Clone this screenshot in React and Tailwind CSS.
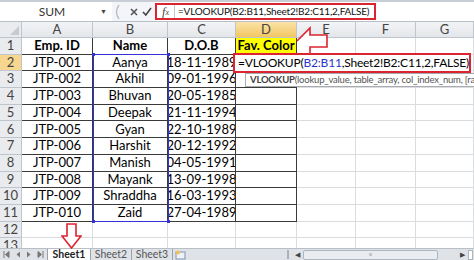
import React from 'react';

const rows = [
  ['Emp. ID', 'Name', 'D.O.B', 'Fav. Color'],
  ['JTP-001', 'Aanya', '18-11-1989'],
  ['JTP-002', 'Akhil', '09-01-1996'],
  ['JTP-003', 'Bhuvan', '20-05-1985'],
  ['JTP-004', 'Deepak', '21-11-1994'],
  ['JTP-005', 'Gyan', '22-10-1989'],
  ['JTP-006', 'Harshit', '20-12-1992'],
  ['JTP-007', 'Manish', '04-05-1991'],
  ['JTP-008', 'Mayank', '13-09-1998'],
  ['JTP-009', 'Shraddha', '16-03-1993'],
  ['JTP-010', 'Zaid', '27-04-1989'],
  [],
  [],
];

const letters = ['A', 'B', 'C', 'D', 'E', 'F', 'G'];

function FormulaBar() {
  return (
    <div>
      <div className="h-[2px] bg-[#c9ced6]" />
      <div className="flex h-[20px] bg-white border-b border-[#b8bec7]">
        <div className="w-[112px] shrink-0 flex items-center">
          <span className="flex-1 text-center text-[12px] text-[#333] pl-[4px]">SUM</span>
          <span className="w-[12px] text-[7px] text-[#444]">▼</span>
        </div>
        <div className="w-[43px] shrink-0 flex items-center bg-[#f3f5f8]">
          <svg width="8" height="16" viewBox="0 0 8 16" className="ml-[1px]">
            <path d="M6 1 Q1 8 6 15" stroke="#b9bec6" strokeWidth="1.4" fill="none" />
          </svg>
          <svg width="8" height="8" viewBox="0 0 8 8" className="ml-[9px]">
            <path d="M1 1 L7 7 M7 1 L1 7" stroke="#555" strokeWidth="1.6" />
          </svg>
          <svg width="10" height="9" viewBox="0 0 10 9" className="ml-[4px]">
            <path d="M1 5 L3.8 8 L9 1" stroke="#444" strokeWidth="1.6" fill="none" />
          </svg>
        </div>
        <div className="flex-1 flex items-start pt-[1px]">
          <div className="w-[221px] h-[17px] shrink-0 border-2 border-[#dc2330] flex items-center overflow-hidden">
            <span className="w-[18px] h-full shrink-0 flex items-center justify-center italic text-[12px] leading-none text-[#444] border-r border-[#c3c8ce] font-['Liberation_Serif',serif]">
              f<span className="text-[8px] mt-[3px]">x</span>
            </span>
            <span className="ml-[3px] text-[10px] tracking-[-0.2px] text-[#111] whitespace-nowrap">
              =VLOOKUP(B2:B11,Sheet2!B2:C11,2,FALSE)
            </span>
          </div>
        </div>
      </div>
    </div>
  );
}

function Grid() {
  return (
    <div className="relative flex-1 overflow-hidden">
      <div className="grid grid-cols-[22px_71px_75px_68px_61px_59px_60px_58px]">
        <div className="h-[16px] bg-[#e9ebee] border-r border-b border-[#bfc5cc] flex items-end justify-end p-[2px]">
          <svg width="9" height="9" viewBox="0 0 9 9">
            <path d="M9 0 L9 9 L0 9 Z" fill="#c6cbd1" />
          </svg>
        </div>
        {letters.map((l) => (
          <div
            key={l}
            className={
              'h-[16px] flex items-center justify-center text-[13px] text-[#444] border-r border-b border-[#bfc5cc] ' +
              (l === 'D' ? 'bg-gradient-to-b from-[#fbe3a6] to-[#f3c662]' : 'bg-gradient-to-b from-[#f3f4f6] to-[#e3e6ea]')
            }
          >
            {l}
          </div>
        ))}
        {rows.map((row, i) => {
          const r = i + 1;
          const inTable = r <= 11;
          return (
            <React.Fragment key={r}>
              <div
                className={
                  'h-[16.7px] flex items-center justify-center text-[13px] text-[#444] border-r border-b border-[#bfc5cc] ' +
                  (r === 2 ? 'bg-[#f7d68f]' : 'bg-[#e9ebee]')
                }
              >
                {r}
              </div>
              {letters.map((l, c) => {
                const table = inTable && c < 4;
                const head = r === 1;
                return (
                  <div
                    key={l}
                    className={
                      'h-[16.7px] flex items-center justify-center whitespace-nowrap overflow-hidden text-[13px] text-black border-r border-b ' +
                      (table ? 'border-[#3a3a3a] ' : 'border-[#dadcdf] ') +
                      (head ? 'font-bold ' : '') +
                      (head && c === 3 ? 'bg-[#ffff00]' : 'bg-white')
                    }
                  >
                    {row[c] || ''}
                  </div>
                );
              })}
            </React.Fragment>
          );
        })}
      </div>

      {/* range highlight B2:B11 */}
      <div className="absolute left-[93px] top-[32px] w-[76px] h-[168px] border border-[#3232d6] pointer-events-none">
        <span className="absolute -left-[2px] -top-[2px] w-[3px] h-[3px] bg-[#3232d6]" />
        <span className="absolute -right-[2px] -top-[2px] w-[3px] h-[3px] bg-[#3232d6]" />
        <span className="absolute -left-[2px] -bottom-[2px] w-[3px] h-[3px] bg-[#3232d6]" />
        <span className="absolute -right-[2px] -bottom-[2px] w-[3px] h-[3px] bg-[#3232d6]" />
      </div>

      {/* cell in edit mode */}
      <div className="absolute left-[233px] top-[31px] w-[238px] h-[20px] border-2 border-[#dc2330] bg-white flex items-center pl-[3px] text-[12px] tracking-[-0.2px] whitespace-nowrap">
        <span>=VLOO</span>
        <span className="w-px h-[13px] bg-black" />
        <span>KUP(</span>
        <span className="text-[#2b35c9]">B2:B11</span>
        <span>,Sheet2!B2:C11,2,FALSE)</span>
      </div>

      {/* function tooltip */}
      <div className="absolute left-[245px] top-[51px] w-[229px] h-[14px] border border-r-0 border-[#a7abb0] bg-white flex items-center pl-[4px] text-[9.5px] tracking-[-0.2px] text-[#555] whitespace-nowrap overflow-hidden">
        <span className="font-bold text-[#444]">VLOOKUP</span>
        <span>(lookup_value, table_array, col_index_num, [ran</span>
      </div>

      {/* red arrow pointing left to D1 */}
      <svg className="absolute left-[295px] top-[4px]" width="34" height="28" viewBox="0 0 34 28">
        <path d="M2 15 L15 2 L15 9 L32 9 L32 21 L15 21 L15 28" fill="white" stroke="#dc2330" strokeWidth="1.6" />
      </svg>
    </div>
  );
}

function TabBar() {
  return (
    <div className="relative h-[12px] flex items-center bg-[#dfe3e8] border-t border-[#b9bfc7] text-[10.5px] text-[#555]">
      {/* red arrow pointing down to Sheet1 */}
      <svg className="absolute left-[61px] -top-[26px]" width="21" height="26" viewBox="0 0 21 26">
        <path d="M6 1 L15 1 L15 13 L20 13 L10.5 25 L1 13 L6 13 Z" fill="white" stroke="#dc2330" strokeWidth="1.6" />
      </svg>
      <div className="flex items-center w-[47px] pl-[3px] gap-[5px]">
        <svg width="7" height="7" viewBox="0 0 7 7"><path d="M1 0 V7 M6 0.5 L2.5 3.5 L6 6.5 Z" stroke="#777" fill="#777" /></svg>
        <svg width="6" height="7" viewBox="0 0 6 7"><path d="M5 0.5 L1.5 3.5 L5 6.5 Z" fill="#777" /></svg>
        <svg width="6" height="7" viewBox="0 0 6 7"><path d="M1 0.5 L4.5 3.5 L1 6.5 Z" fill="#777" /></svg>
        <svg width="7" height="7" viewBox="0 0 7 7"><path d="M6 0 V7 M1 0.5 L4.5 3.5 L1 6.5 Z" stroke="#777" fill="#777" /></svg>
      </div>
      <div className="h-full w-[44px] bg-white flex items-center justify-center font-bold text-[#222] border-x border-[#9aa2ad]">
        Sheet1
      </div>
      <div className="h-full w-[41px] flex items-center justify-center border-r border-[#9aa2ad]">Sheet2</div>
      <div className="h-full w-[41px] flex items-center justify-center border-r border-[#9aa2ad]">Sheet3</div>
      <div className="w-[16px] flex justify-center">
        <svg width="12" height="10" viewBox="0 0 12 10">
          <rect x="1" y="2" width="9" height="7" fill="#eef2f7" stroke="#7e95b4" />
          <circle cx="3" cy="2.5" r="2" fill="#f2c24e" />
        </svg>
      </div>
      <div className="flex-1" />
      <div className="h-full flex items-center w-[187px]">
        <span className="w-[2px] h-[9px] bg-[#aab1ba] mr-[6px]" />
        <span className="text-[7px] text-[#444] w-[8px]">◀</span>
        <div className="w-[135px] h-[10px] bg-[#e9ecf0] border border-[#aeb5be] rounded-[2px] flex items-center justify-center">
          <span className="text-[6px] text-[#99a]">≡</span>
        </div>
        <div className="flex-1" />
        <span className="text-[7px] text-[#444] w-[8px]">▶</span>
        <span className="w-[5px] h-[10px] border border-[#aeb5be] bg-white mr-[1px]" />
      </div>
    </div>
  );
}

export default function App() {
  return (
    <div className="w-[474px] h-[260px] overflow-hidden flex flex-col bg-white font-['Lato','Liberation_Sans',sans-serif]">
      <FormulaBar />
      <Grid />
      <TabBar />
    </div>
  );
}
